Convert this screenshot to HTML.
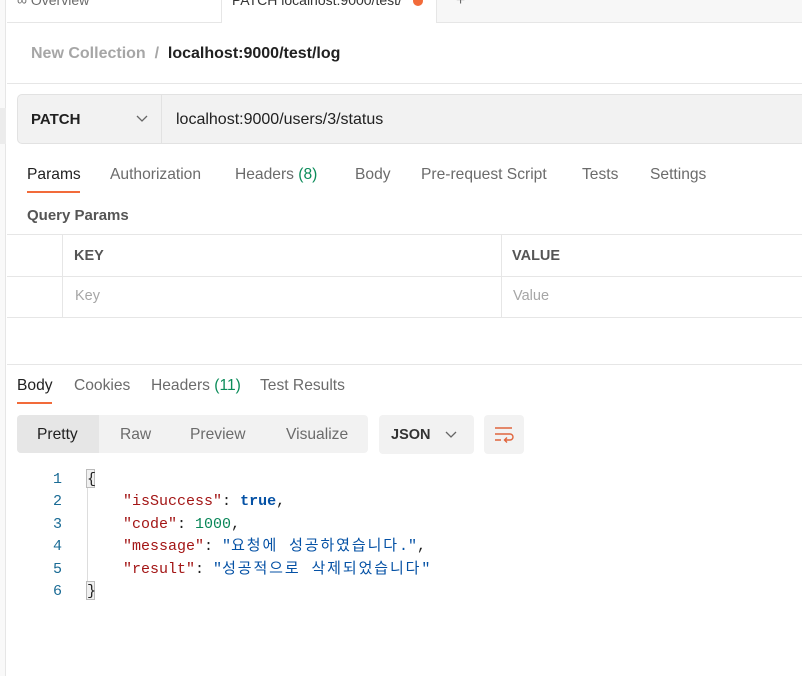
<!DOCTYPE html>
<html><head><meta charset="utf-8"><style>
*{margin:0;padding:0;box-sizing:border-box}
body{width:802px;height:676px;overflow:hidden;background:#fff;font-family:"Liberation Sans","Noto Sans CJK KR",sans-serif;position:relative;color:#212121}
.a{position:absolute}
.t{font-size:15.6px;color:#6b6b6b;white-space:nowrap}
.code{font-family:"Liberation Mono","Noto Sans CJK KR",monospace;font-size:15px;white-space:pre}
.k{letter-spacing:1.9px}
</style></head><body>
<div class="a" style="left:0;top:0;width:6px;height:676px;background:#f9f9f9;border-right:1px solid #e6e6e6"></div>
<div class="a" style="left:0;top:108px;width:6px;height:36px;background:#ececec"></div>
<div class="a" style="left:7px;top:0;width:795px;height:23px;background:#f7f7f7;border-bottom:1px solid #e6e6e6"></div>
<div class="a" style="left:7px;top:0;width:215px;height:22px;background:#fff;border-right:1px solid #e6e6e6"></div>
<div class="a t" style="left:17px;top:-8px;font-size:14px">∞ Overview</div>
<div class="a" style="left:222px;top:0;width:215px;height:23px;background:#fff;border-right:1px solid #e6e6e6"></div>
<div class="a t" style="left:232px;top:-8px;font-size:14px;color:#333">PATCH localhost:9000/test/</div>
<div class="a" style="left:413px;top:-4px;width:10px;height:10px;border-radius:50%;background:#f26b3a"></div>
<div class="a t" style="left:456px;top:-8px">+</div>
<div class="a" style="left:31px;top:45px;font-size:16px;font-weight:bold;color:#a6a6a6;white-space:nowrap">New Collection &nbsp;/&nbsp; <span style="color:#212121">localhost:9000/test/log</span></div>
<div class="a" style="left:7px;top:83px;width:795px;height:1px;background:#e6e6e6"></div>
<div class="a" style="left:17px;top:94px;width:800px;height:50px;background:#f2f2f2;border:1px solid #e2e2e2;border-radius:5px"></div>
<div class="a" style="left:161px;top:95px;width:1px;height:48px;background:#e2e2e2"></div>
<div class="a" style="left:31px;top:111px;font-size:15px;font-weight:bold;color:#212121">PATCH</div>
<svg class="a" style="left:136px;top:115px" width="12" height="8"><path d="M1 1l5 5 5-5" fill="none" stroke="#666" stroke-width="1.3"/></svg>
<div class="a" style="left:176px;top:111px;font-size:16px;color:#212121">localhost:9000/users/3/status</div>
<div class="a t" style="left:27px;top:166px;color:#212121">Params</div>
<div class="a" style="left:27px;top:191px;width:53px;height:2px;background:#f26b3a"></div>
<div class="a t" style="left:110px;top:166px">Authorization</div>
<div class="a t" style="left:235px;top:166px">Headers <span style="color:#0c8c5a">(8)</span></div>
<div class="a t" style="left:355px;top:166px">Body</div>
<div class="a t" style="left:421px;top:166px">Pre-request Script</div>
<div class="a t" style="left:582px;top:166px">Tests</div>
<div class="a t" style="left:650px;top:166px">Settings</div>
<div class="a" style="left:27px;top:207px;font-size:15px;font-weight:bold;color:#555">Query Params</div>
<div class="a" style="left:7px;top:234px;width:795px;height:1px;background:#e6e6e6"></div>
<div class="a" style="left:7px;top:276px;width:795px;height:1px;background:#e6e6e6"></div>
<div class="a" style="left:7px;top:317px;width:795px;height:1px;background:#e6e6e6"></div>
<div class="a" style="left:62px;top:234px;width:1px;height:84px;background:#e6e6e6"></div>
<div class="a" style="left:501px;top:234px;width:1px;height:84px;background:#e6e6e6"></div>
<div class="a" style="left:74px;top:248px;font-size:14.5px;font-weight:bold;color:#555">KEY</div>
<div class="a" style="left:512px;top:248px;font-size:14.5px;font-weight:bold;color:#555">VALUE</div>
<div class="a" style="left:75px;top:288px;font-size:14.5px;color:#a6a6a6">Key</div>
<div class="a" style="left:513px;top:288px;font-size:14.5px;color:#a6a6a6">Value</div>
<div class="a" style="left:7px;top:364px;width:795px;height:1px;background:#e6e6e6"></div>
<div class="a t" style="left:17px;top:377px;color:#212121">Body</div>
<div class="a" style="left:17px;top:402px;width:35px;height:2px;background:#f26b3a"></div>
<div class="a t" style="left:74px;top:377px">Cookies</div>
<div class="a t" style="left:151px;top:377px">Headers <span style="color:#0c8c5a">(11)</span></div>
<div class="a t" style="left:260px;top:377px">Test Results</div>
<div class="a" style="left:17px;top:415px;width:351px;height:38px;background:#f2f2f2;border-radius:4px"></div>
<div class="a" style="left:17px;top:415px;width:82px;height:38px;background:#e6e6e6;border-radius:4px 0 0 4px"></div>
<div class="a t" style="left:37px;top:426px;color:#212121">Pretty</div>
<div class="a t" style="left:120px;top:426px">Raw</div>
<div class="a t" style="left:190px;top:426px">Preview</div>
<div class="a t" style="left:286px;top:426px">Visualize</div>
<div class="a" style="left:379px;top:415px;width:95px;height:39px;background:#f2f2f2;border-radius:4px"></div>
<div class="a" style="left:391px;top:427px;font-size:14.5px;font-weight:bold;color:#333">JSON</div>
<svg class="a" style="left:445px;top:431px" width="12" height="8"><path d="M1 1l5 5 5-5" fill="none" stroke="#666" stroke-width="1.3"/></svg>
<div class="a" style="left:484px;top:415px;width:40px;height:39px;background:#f2f2f2;border-radius:4px"></div>
<svg class="a" style="left:493px;top:425px" width="22" height="18"><path d="M2 3h17M2 9h15a3 3 0 0 1 0 6h-5M14 12.5l-2.5 2.5 2.5 2.5M2 15h6" fill="none" stroke="#e0643c" stroke-width="1.4"/></svg>
<div class="a code" style="left:38px;top:469px;width:24px;text-align:right;color:#1a6b95;line-height:22.4px">1
2
3
4
5
6</div>
<div class="a" style="left:86px;top:469px;width:9px;height:19px;border:1px solid #bbb;background:#f0f0f0"></div>
<div class="a" style="left:86px;top:581px;width:9px;height:19px;border:1px solid #bbb;background:#f0f0f0"></div>
<div class="a" style="left:87px;top:488px;width:1px;height:93px;background:#ddd"></div>
<div class="a code" style="left:87px;top:469px;line-height:22.4px;color:#212121">{
    <span style="color:#a31515">"isSuccess"</span>: <span style="color:#0451a5;font-weight:bold">true</span>,
    <span style="color:#a31515">"code"</span>: <span style="color:#098658">1000</span>,
    <span style="color:#a31515">"message"</span>: <span style="color:#0451a5">"<span class="k">요청에 성공하였습니다</span>."</span>,
    <span style="color:#a31515">"result"</span>: <span style="color:#0451a5">"<span class="k">성공적으로 삭제되었습니다</span>"</span>
}</div>
</body></html>
